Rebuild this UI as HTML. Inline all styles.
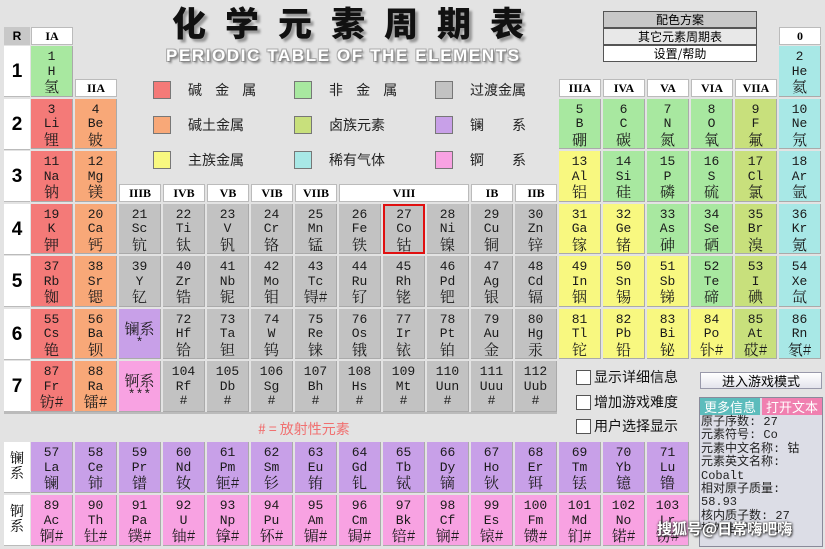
<!DOCTYPE html>
<html><head><meta charset="utf-8">
<style>
*{margin:0;padding:0;box-sizing:border-box}
body{width:825px;height:549px;background:#e3e3e3;position:relative;overflow:hidden;font-family:"Liberation Sans","Noto Sans CJK SC",sans-serif}
.g{position:absolute;left:31px;display:grid;grid-template-columns:repeat(18,42px);column-gap:2px}
#t{top:46px;grid-template-rows:repeat(7,50.5px);row-gap:2px}
#b{top:442px;grid-template-rows:repeat(2,51px);row-gap:2px}
.c{text-align:center;font-family:"Liberation Mono","Noto Serif CJK SC",monospace;font-size:13px;line-height:14.5px;padding-top:4px;color:#1a1a1a;border-right:1px solid #aaa;border-bottom:1px solid #aaa}
.c b{font-weight:normal;font-family:"Noto Serif CJK SC","Noto Sans CJK SC",serif;font-size:15px;display:block;line-height:15px}
.a{background:#f47a78}.e{background:#f8a878}.y{background:#f8f880}.n{background:#a8e8a0}.h{background:#c8e07c}.r{background:#a8e8e6}.l{background:#c8a0e8}.k{background:#f8a2e2}.t{background:#c2c2c2}
.hd{align-self:end;height:18px;background:#fff;border:1px solid #bbb;font-family:"Liberation Serif",serif;font-weight:bold;font-size:12px;text-align:center;line-height:16px}
.rl{position:absolute;left:4px;width:26px;background:#fff;font-weight:bold;font-size:19px;text-align:center;border-bottom:1px solid #bbb}
.lg{position:absolute;width:18px;height:18px;border:1px solid #777}
.lt{position:absolute;font-family:"Noto Sans CJK SC",sans-serif;font-size:14px;color:#222;line-height:18px}
.cb{position:absolute;left:576px;width:15px;height:15px;background:#fff;border:1px solid #555}
.ct{position:absolute;left:594px;font-family:"Noto Sans CJK SC",sans-serif;font-size:14px;line-height:16px;color:#111}
.btn{position:absolute;left:603px;width:154px;height:17px;border:1px solid #555;font-family:"Noto Sans CJK SC",sans-serif;font-size:12px;text-align:center;line-height:15px}
</style></head><body>
<div style="position:absolute;left:172px;top:2px;font-family:'Noto Sans CJK SC',sans-serif;font-weight:900;font-size:34px;letter-spacing:19px;color:#111;text-shadow:3px 3px 2px #999;line-height:40px">化学元素周期表</div>
<div style="position:absolute;left:166px;top:46px;font-family:'Liberation Sans',sans-serif;font-weight:900;font-size:17px;color:#fff;text-shadow:1px 1px 0 #888,-1px -1px 0 #aaa,1px -1px 0 #aaa,-1px 1px 0 #aaa,2px 2px 2px #777;letter-spacing:1.6px">PERIODIC TABLE OF THE ELEMENTS</div>

<div class="btn" style="top:11px;background:#c8c8c8">配色方案</div>
<div class="btn" style="top:28px;background:#e8e8e8">其它元素周期表</div>
<div class="btn" style="top:45px;background:#fff">设置/帮助</div>

<div style="position:absolute;left:4px;top:27px;width:26px;height:18px;background:#c8c8c8;font-weight:bold;font-size:12px;text-align:center;line-height:18px">R</div>
<div class="hd" style="position:absolute;left:31px;top:27px;width:42px">IA</div>
<div class="hd" style="position:absolute;left:779px;top:27px;width:42px">0</div>
<div class="rl" style="top:46px;height:51px;line-height:51px">1</div>
<div class="rl" style="top:99px;height:51px;line-height:51px">2</div>
<div class="rl" style="top:151px;height:51px;line-height:51px">3</div>
<div class="rl" style="top:204px;height:51px;line-height:51px">4</div>
<div class="rl" style="top:256px;height:51px;line-height:51px">5</div>
<div class="rl" style="top:309px;height:51px;line-height:51px">6</div>
<div class="rl" style="top:361px;height:51px;line-height:51px">7</div>
<div class="rl" style="top:442px;height:51px;font-size:14px;font-weight:normal;line-height:15px;padding-top:9px;font-family:'Noto Serif CJK SC',serif">镧<br>系</div>
<div class="rl" style="top:495px;height:51px;font-size:14px;font-weight:normal;line-height:15px;padding-top:9px;font-family:'Noto Serif CJK SC',serif">锕<br>系</div>

<div class="lg" style="left:153px;top:81px;background:#f47a78"></div><div class="lt" style="left:188px;top:81px;letter-spacing:5px">碱 金 属</div>
<div class="lg" style="left:153px;top:116px;background:#f8a878"></div><div class="lt" style="left:188px;top:116px">碱土金属</div>
<div class="lg" style="left:153px;top:151px;background:#f8f880"></div><div class="lt" style="left:188px;top:151px">主族金属</div>
<div class="lg" style="left:294px;top:81px;background:#a8e8a0"></div><div class="lt" style="left:329px;top:81px;letter-spacing:5px">非 金 属</div>
<div class="lg" style="left:294px;top:116px;background:#c8e07c"></div><div class="lt" style="left:329px;top:116px">卤族元素</div>
<div class="lg" style="left:294px;top:151px;background:#a8e8e6"></div><div class="lt" style="left:329px;top:151px">稀有气体</div>
<div class="lg" style="left:435px;top:81px;background:#c2c2c2"></div><div class="lt" style="left:470px;top:81px">过渡金属</div>
<div class="lg" style="left:435px;top:116px;background:#c8a0e8"></div><div class="lt" style="left:470px;top:116px">镧&emsp;&emsp;系</div>
<div class="lg" style="left:435px;top:151px;background:#f8a2e2"></div><div class="lt" style="left:470px;top:151px">锕&emsp;&emsp;系</div>

<div class="g" id="t">
<div class="c n" style="grid-area:1/1">1<br>H<b>氢</b></div>
<div class="hd" style="grid-area:1/2">IIA</div>
<div class="hd" style="grid-area:1/13">IIIA</div><div class="hd" style="grid-area:1/14">IVA</div><div class="hd" style="grid-area:1/15">VA</div><div class="hd" style="grid-area:1/16">VIA</div><div class="hd" style="grid-area:1/17">VIIA</div>
<div class="c r" style="grid-area:1/18">2<br>He<b>氦</b></div>

<div class="c a" style="grid-area:2/1">3<br>Li<b>锂</b></div><div class="c e" style="grid-area:2/2">4<br>Be<b>铍</b></div>
<div class="c n" style="grid-area:2/13">5<br>B<b>硼</b></div><div class="c n" style="grid-area:2/14">6<br>C<b>碳</b></div><div class="c n" style="grid-area:2/15">7<br>N<b>氮</b></div><div class="c n" style="grid-area:2/16">8<br>O<b>氧</b></div><div class="c h" style="grid-area:2/17">9<br>F<b>氟</b></div><div class="c r" style="grid-area:2/18">10<br>Ne<b>氖</b></div>

<div class="c a" style="grid-area:3/1">11<br>Na<b>钠</b></div><div class="c e" style="grid-area:3/2">12<br>Mg<b>镁</b></div>
<div class="hd" style="grid-area:3/3">IIIB</div><div class="hd" style="grid-area:3/4">IVB</div><div class="hd" style="grid-area:3/5">VB</div><div class="hd" style="grid-area:3/6">VIB</div><div class="hd" style="grid-area:3/7">VIIB</div><div class="hd" style="grid-area:3/8/4/11">VIII</div><div class="hd" style="grid-area:3/11">IB</div><div class="hd" style="grid-area:3/12">IIB</div>
<div class="c y" style="grid-area:3/13">13<br>Al<b>铝</b></div><div class="c n" style="grid-area:3/14">14<br>Si<b>硅</b></div><div class="c n" style="grid-area:3/15">15<br>P<b>磷</b></div><div class="c n" style="grid-area:3/16">16<br>S<b>硫</b></div><div class="c h" style="grid-area:3/17">17<br>Cl<b>氯</b></div><div class="c r" style="grid-area:3/18">18<br>Ar<b>氩</b></div>

<div class="c a" style="grid-area:4/1">19<br>K<b>钾</b></div><div class="c e" style="grid-area:4/2">20<br>Ca<b>钙</b></div>
<div class="c t" style="grid-area:4/3">21<br>Sc<b>钪</b></div><div class="c t" style="grid-area:4/4">22<br>Ti<b>钛</b></div><div class="c t" style="grid-area:4/5">23<br>V<b>钒</b></div><div class="c t" style="grid-area:4/6">24<br>Cr<b>铬</b></div><div class="c t" style="grid-area:4/7">25<br>Mn<b>锰</b></div><div class="c t" style="grid-area:4/8">26<br>Fe<b>铁</b></div><div class="c t" style="grid-area:4/9;border:2px solid #e01010;padding-top:2px">27<br>Co<b>钴</b></div><div class="c t" style="grid-area:4/10">28<br>Ni<b>镍</b></div><div class="c t" style="grid-area:4/11">29<br>Cu<b>铜</b></div><div class="c t" style="grid-area:4/12">30<br>Zn<b>锌</b></div>
<div class="c y" style="grid-area:4/13">31<br>Ga<b>镓</b></div><div class="c y" style="grid-area:4/14">32<br>Ge<b>锗</b></div><div class="c n" style="grid-area:4/15">33<br>As<b>砷</b></div><div class="c n" style="grid-area:4/16">34<br>Se<b>硒</b></div><div class="c h" style="grid-area:4/17">35<br>Br<b>溴</b></div><div class="c r" style="grid-area:4/18">36<br>Kr<b>氪</b></div>

<div class="c a" style="grid-area:5/1">37<br>Rb<b>铷</b></div><div class="c e" style="grid-area:5/2">38<br>Sr<b>锶</b></div>
<div class="c t" style="grid-area:5/3">39<br>Y<b>钇</b></div><div class="c t" style="grid-area:5/4">40<br>Zr<b>锆</b></div><div class="c t" style="grid-area:5/5">41<br>Nb<b>铌</b></div><div class="c t" style="grid-area:5/6">42<br>Mo<b>钼</b></div><div class="c t" style="grid-area:5/7">43<br>Tc<b>锝#</b></div><div class="c t" style="grid-area:5/8">44<br>Ru<b>钌</b></div><div class="c t" style="grid-area:5/9">45<br>Rh<b>铑</b></div><div class="c t" style="grid-area:5/10">46<br>Pd<b>钯</b></div><div class="c t" style="grid-area:5/11">47<br>Ag<b>银</b></div><div class="c t" style="grid-area:5/12">48<br>Cd<b>镉</b></div>
<div class="c y" style="grid-area:5/13">49<br>In<b>铟</b></div><div class="c y" style="grid-area:5/14">50<br>Sn<b>锡</b></div><div class="c y" style="grid-area:5/15">51<br>Sb<b>锑</b></div><div class="c n" style="grid-area:5/16">52<br>Te<b>碲</b></div><div class="c h" style="grid-area:5/17">53<br>I<b>碘</b></div><div class="c r" style="grid-area:5/18">54<br>Xe<b>氙</b></div>

<div class="c a" style="grid-area:6/1">55<br>Cs<b>铯</b></div><div class="c e" style="grid-area:6/2">56<br>Ba<b>钡</b></div>
<div class="c l" style="grid-area:6/3;padding-top:12px"><b>镧系</b>*</div>
<div class="c t" style="grid-area:6/4">72<br>Hf<b>铪</b></div><div class="c t" style="grid-area:6/5">73<br>Ta<b>钽</b></div><div class="c t" style="grid-area:6/6">74<br>W<b>钨</b></div><div class="c t" style="grid-area:6/7">75<br>Re<b>铼</b></div><div class="c t" style="grid-area:6/8">76<br>Os<b>锇</b></div><div class="c t" style="grid-area:6/9">77<br>Ir<b>铱</b></div><div class="c t" style="grid-area:6/10">78<br>Pt<b>铂</b></div><div class="c t" style="grid-area:6/11">79<br>Au<b>金</b></div><div class="c t" style="grid-area:6/12">80<br>Hg<b>汞</b></div>
<div class="c y" style="grid-area:6/13">81<br>Tl<b>铊</b></div><div class="c y" style="grid-area:6/14">82<br>Pb<b>铅</b></div><div class="c y" style="grid-area:6/15">83<br>Bi<b>铋</b></div><div class="c y" style="grid-area:6/16">84<br>Po<b>钋#</b></div><div class="c h" style="grid-area:6/17">85<br>At<b>砹#</b></div><div class="c r" style="grid-area:6/18">86<br>Rn<b>氡#</b></div>

<div class="c a" style="grid-area:7/1">87<br>Fr<b>钫#</b></div><div class="c e" style="grid-area:7/2">88<br>Ra<b>镭#</b></div>
<div class="c k" style="grid-area:7/3;padding-top:12px"><b>锕系</b>***</div>
<div class="c t" style="grid-area:7/4">104<br>Rf<br>#</div><div class="c t" style="grid-area:7/5">105<br>Db<br>#</div><div class="c t" style="grid-area:7/6">106<br>Sg<br>#</div><div class="c t" style="grid-area:7/7">107<br>Bh<br>#</div><div class="c t" style="grid-area:7/8">108<br>Hs<br>#</div><div class="c t" style="grid-area:7/9">109<br>Mt<br>#</div><div class="c t" style="grid-area:7/10">110<br>Uun<br>#</div><div class="c t" style="grid-area:7/11">111<br>Uuu<br>#</div><div class="c t" style="grid-area:7/12">112<br>Uub<br>#</div>
</div>

<div style="position:absolute;left:4px;top:412px;width:553px;height:2px;background:#bbb"></div>
<div style="position:absolute;left:258px;top:419px;font-family:'Noto Sans CJK SC',sans-serif;font-size:14px;color:#f07070">#&nbsp;=&nbsp;放射性元素</div>

<div class="g" id="b">
<div class="c l" style="grid-area:1/1">57<br>La<b>镧</b></div><div class="c l" style="grid-area:1/2">58<br>Ce<b>铈</b></div><div class="c l" style="grid-area:1/3">59<br>Pr<b>镨</b></div><div class="c l" style="grid-area:1/4">60<br>Nd<b>钕</b></div><div class="c l" style="grid-area:1/5">61<br>Pm<b>钷#</b></div><div class="c l" style="grid-area:1/6">62<br>Sm<b>钐</b></div><div class="c l" style="grid-area:1/7">63<br>Eu<b>铕</b></div><div class="c l" style="grid-area:1/8">64<br>Gd<b>钆</b></div><div class="c l" style="grid-area:1/9">65<br>Tb<b>铽</b></div><div class="c l" style="grid-area:1/10">66<br>Dy<b>镝</b></div><div class="c l" style="grid-area:1/11">67<br>Ho<b>钬</b></div><div class="c l" style="grid-area:1/12">68<br>Er<b>铒</b></div><div class="c l" style="grid-area:1/13">69<br>Tm<b>铥</b></div><div class="c l" style="grid-area:1/14">70<br>Yb<b>镱</b></div><div class="c l" style="grid-area:1/15">71<br>Lu<b>镥</b></div>
<div class="c k" style="grid-area:2/1">89<br>Ac<b>锕#</b></div><div class="c k" style="grid-area:2/2">90<br>Th<b>钍#</b></div><div class="c k" style="grid-area:2/3">91<br>Pa<b>镤#</b></div><div class="c k" style="grid-area:2/4">92<br>U<b>铀#</b></div><div class="c k" style="grid-area:2/5">93<br>Np<b>镎#</b></div><div class="c k" style="grid-area:2/6">94<br>Pu<b>钚#</b></div><div class="c k" style="grid-area:2/7">95<br>Am<b>镅#</b></div><div class="c k" style="grid-area:2/8">96<br>Cm<b>锔#</b></div><div class="c k" style="grid-area:2/9">97<br>Bk<b>锫#</b></div><div class="c k" style="grid-area:2/10">98<br>Cf<b>锎#</b></div><div class="c k" style="grid-area:2/11">99<br>Es<b>锿#</b></div><div class="c k" style="grid-area:2/12">100<br>Fm<b>镄#</b></div><div class="c k" style="grid-area:2/13">101<br>Md<b>钔#</b></div><div class="c k" style="grid-area:2/14">102<br>No<b>锘#</b></div><div class="c k" style="grid-area:2/15">103<br>Lr<b>铹#</b></div>
</div>

<div class="cb" style="top:370px"></div><div class="ct" style="top:369px">显示详细信息</div>
<div class="cb" style="top:395px"></div><div class="ct" style="top:394px">增加游戏难度</div>
<div class="cb" style="top:419px"></div><div class="ct" style="top:418px">用户选择显示</div>

<div style="position:absolute;left:700px;top:372px;width:122px;height:17px;background:linear-gradient(#fff,#e4e4ec);border:1px solid #99a;font-family:'Noto Sans CJK SC',sans-serif;font-size:13px;text-align:center;line-height:15px">进入游戏模式</div>
<div style="position:absolute;left:699px;top:397px;width:124px;height:150px;background:#dcdde6;border:1px solid #8a8a9a"></div>
<div style="position:absolute;left:700px;top:398px;width:60px;height:17px;background:#5cbcbc;color:#fff;font-family:'Noto Sans CJK SC',sans-serif;font-size:13px;text-align:center;line-height:17px">更多信息</div>
<div style="position:absolute;left:762px;top:398px;width:60px;height:17px;background:#f080b0;color:#fff;font-family:'Noto Sans CJK SC',sans-serif;font-size:13px;text-align:center;line-height:17px">打开文本</div>
<div style="position:absolute;left:701px;top:416px;width:120px;font-family:'Liberation Mono','Noto Sans CJK SC',monospace;font-size:12px;line-height:13.4px;color:#222">原子序数: 27<br>元素符号: Co<br>元素中文名称: 钴<br>元素英文名称:<br>Cobalt<br>相对原子质量:<br>58.93<br>核内质子数: 27<br>核外电子数: 27</div>
<div style="position:absolute;left:657px;top:518px;font-family:'Noto Sans CJK SC',sans-serif;font-size:15px;font-weight:bold;color:#fff;text-shadow:1px 1px 2px #333,0 0 2px #333">搜狐号@日常嗨吧嗨</div>
</body></html>
